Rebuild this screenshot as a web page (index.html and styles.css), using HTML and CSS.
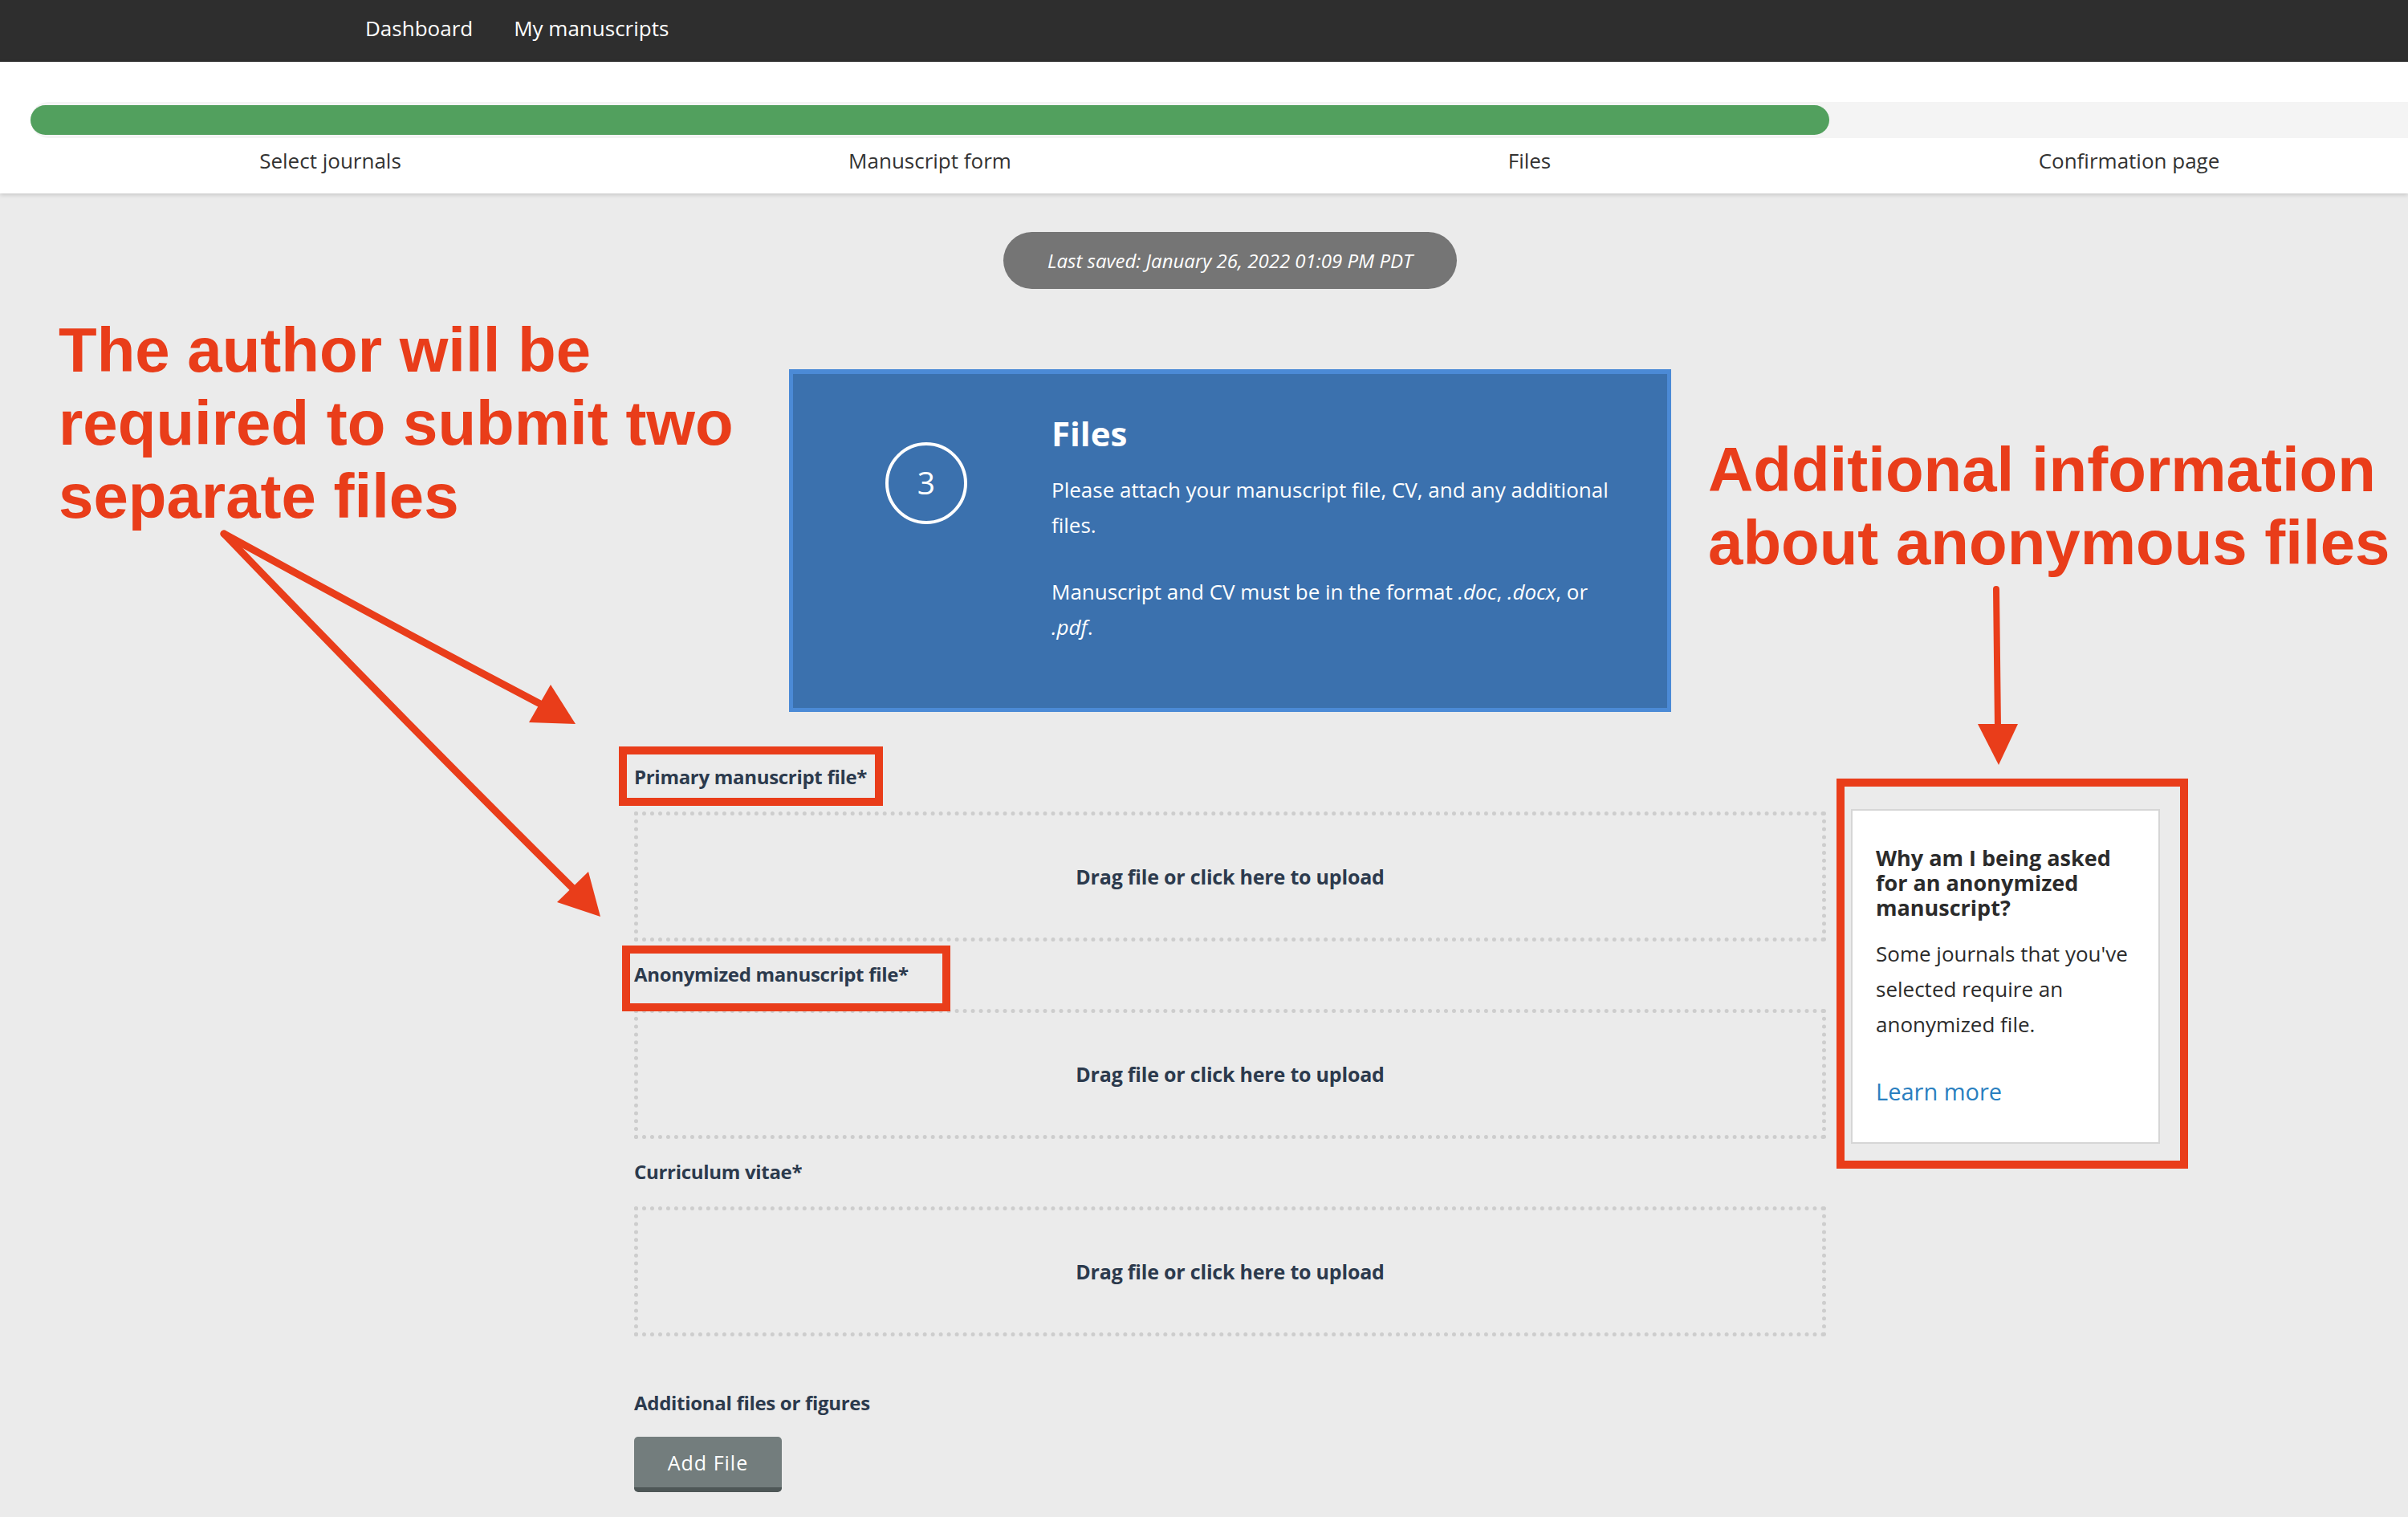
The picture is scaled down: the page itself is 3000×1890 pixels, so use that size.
FILE: index.html
```html
<!DOCTYPE html>
<html lang="en">
<head>
  <meta charset="UTF-8">
  <meta name="viewport" content="width=device-width, initial-scale=1.0">
  <title>Submit manuscript - Files</title>
  <link rel="stylesheet" href="styles.css">
</head>
<body>
  <div class="page">
    <nav class="topnav">
      <a href="#">Dashboard</a>
      <a href="#">My manuscripts</a>
    </nav>

    <header class="progress-header">
      <div class="progress-track">
        <div class="progress-fill"></div>
      </div>
      <ol class="steps">
        <li>Select journals</li>
        <li>Manuscript form</li>
        <li>Files</li>
        <li>Confirmation page</li>
      </ol>
    </header>

    <main class="content">
      <div class="last-saved">Last saved: January 26, 2022 01:09 PM PDT</div>

      <section class="intro">
        <div class="step-circle">3</div>
        <div class="intro-text">
          <h1>Files</h1>
          <p>Please attach your manuscript file, CV, and any additional files.</p>
          <p>Manuscript and CV must be in the format <em>.doc</em>, <em>.docx</em>, or <em>.pdf</em>.</p>
        </div>
      </section>

      <div class="fields">
        <div class="field">
          <label class="field-label"><span class="marked marked-primary">Primary manuscript file*</span></label>
          <div class="dropzone">Drag file or click here to upload</div>
        </div>
        <div class="field">
          <label class="field-label"><span class="marked marked-anon">Anonymized manuscript file*</span></label>
          <div class="dropzone">Drag file or click here to upload</div>
        </div>
        <div class="field">
          <label class="field-label">Curriculum vitae*</label>
          <div class="dropzone">Drag file or click here to upload</div>
        </div>
        <div class="field field-extra">
          <label class="field-label">Additional files or figures</label>
          <button type="button" class="add-button">Add File</button>
        </div>
      </div>

      <aside class="help">
        <div class="help-card">
          <h2>Why am I being asked for an anonymized manuscript?</h2>
          <p>Some journals that you've selected require an anonymized file.</p>
          <a href="#">Learn more</a>
        </div>
      </aside>
    </main>

    <!-- review annotations laid over the screenshot -->
    <p class="note note-left">The author will be required to submit two separate files</p>
    <p class="note note-right">Additional information about anonymous files</p>
    <svg class="arrows" width="3000" height="1890" viewBox="0 0 3000 1890">
      <g fill="none" stroke="#e93d1a" stroke-width="9" stroke-linecap="round">
        <path d="M279 665 Q 470 770 675 878"/>
        <path d="M279 665 Q 500 895 713 1106"/>
        <path d="M2487 734 L 2489 906" stroke-width="8"/>
      </g>
      <g fill="#e93d1a">
        <polygon points="717,902 659,900 686,853"/>
        <polygon points="748,1142 694,1124 733,1086"/>
        <polygon points="2464,902 2514,902 2490,953"/>
      </g>
    </svg>
  </div>
</body>
</html>
```

FILE: styles.css
```css
:root {
  --nav-bg: #2e2e2e;
  --page-bg: #ebebeb;
  --green: #52a05e;
  --track: #f4f4f4;
  --ink: #2c3a4d;
  --blue: #3b71ae;
  --blue-edge: #4b8ad6;
  --note-red: #e93d1a;
  --link: #2a7fc0;
}

* {
  box-sizing: border-box;
  margin: 0;
  padding: 0;
}

body {
  font-family: 'Open Sans', 'Noto Sans', sans-serif;
  background-color: var(--page-bg);
  color: var(--ink);
}

.page {
  position: relative;
  min-height: 1890px;
  overflow: hidden;
}

/* top navigation */
.topnav {
  display: flex;
  gap: 51px;
  height: 77px;
  padding-left: 455px;
  background-color: var(--nav-bg);
}

.topnav a {
  color: #ffffff;
  text-decoration: none;
  font-size: 26px;
  line-height: 71px;
}

/* progress */
.progress-header {
  background-color: #ffffff;
  padding: 50px 0 0 38px;
  box-shadow: 0 2px 5px rgba(0, 0, 0, 0.15);
  position: relative;
  z-index: 1;
}

.progress-track {
  width: 2988px;
  padding: 4px 0;
  background-color: var(--track);
  border-radius: 23px 0 0 23px;
}

.progress-fill {
  width: 75%;
  height: 37px;
  background-color: var(--green);
  border-radius: 19px;
}

.steps {
  list-style: none;
  display: grid;
  grid-template-columns: repeat(4, 747px);
  padding: 13px 0 26px;
}

.steps li {
  text-align: center;
  font-size: 26px;
  line-height: 30px;
  color: #333333;
}

/* main grid */
.content {
  display: grid;
  grid-template-columns: 1485px 385px;
  column-gap: 31px;
  padding-left: 790px;
  padding-bottom: 30px;
}

.last-saved {
  grid-column: 1;
  justify-self: center;
  margin-top: 48px;
  height: 71px;
  padding: 0 55px;
  border-radius: 36px;
  background-color: #757575;
  color: #ffffff;
  font-style: italic;
  font-size: 24px;
  line-height: 71px;
}

.intro {
  grid-column: 1;
  justify-self: center;
  display: flex;
  align-items: flex-start;
  gap: 105px;
  width: 1099px;
  height: 427px;
  margin-top: 100px;
  padding: 49px 0 0 115px;
  background-color: var(--blue);
  border: 5px solid var(--blue-edge);
  border-top-width: 6px;
  color: #ffffff;
}

.step-circle {
  flex: none;
  width: 102px;
  height: 102px;
  margin-top: 36px;
  border: 4px solid #ffffff;
  border-radius: 50%;
  text-align: center;
  font-size: 39px;
  line-height: 92px;
}

.intro-text {
  width: 720px;
}

.intro-text h1 {
  font-size: 42px;
  font-weight: 700;
  line-height: 50px;
  margin-bottom: 23px;
}

.intro-text p {
  font-size: 26px;
  line-height: 44px;
}

.intro-text p + p {
  margin-top: 39px;
}

/* upload fields */
.fields {
  grid-column: 1;
  grid-row: 3;
  margin-top: 66px;
}

.field {
  margin-bottom: 26px;
}

.field-label {
  display: block;
  margin-bottom: 28px;
  font-size: 24px;
  font-weight: 700;
  letter-spacing: -0.3px;
  line-height: 30px;
}

.dropzone {
  height: 162px;
  display: flex;
  align-items: center;
  justify-content: center;
  border: 5px dotted #cdcdcd;
  font-size: 25px;
  font-weight: 700;
  letter-spacing: -0.2px;
  cursor: pointer;
}

.field-extra {
  margin-top: 68px;
}

.field-extra .field-label {
  margin-bottom: 27px;
}

.add-button {
  width: 184px;
  height: 69px;
  border: none;
  border-bottom: 6px solid #4e5757;
  border-radius: 5px;
  background-color: #737d7d;
  color: #ffffff;
  font-family: inherit;
  font-size: 25px;
  letter-spacing: 1px;
  cursor: pointer;
}

/* help card */
.help {
  grid-column: 2;
  grid-row: 3;
  align-self: start;
  margin-top: 121px;
}

.help-card {
  position: relative;
  background-color: #ffffff;
  border: 2px solid #d6d6d6;
  padding: 43px 29px 43px;
}

.help-card h2 {
  font-size: 27px;
  font-weight: 700;
  line-height: 31px;
  color: #2b2b2b;
  margin-bottom: 20px;
}

.help-card p {
  font-size: 26px;
  line-height: 44px;
  color: #2b2b2b;
  margin-bottom: 42px;
}

.help-card a {
  display: block;
  font-size: 29px;
  line-height: 40px;
  color: var(--link);
  text-decoration: none;
}

/* red review marks */
.marked {
  position: relative;
}

.marked::after {
  content: '';
  position: absolute;
  border: 10px solid var(--note-red);
}

.marked-primary::after {
  left: -19px;
  right: -20px;
  top: -21px;
  bottom: -20px;
}

.marked-anon::after {
  left: -15px;
  right: -52px;
  top: -19px;
  bottom: -30px;
}

.help-card::after {
  content: '';
  position: absolute;
  left: -20px;
  right: -37px;
  top: -40px;
  bottom: -33px;
  border: 10px solid var(--note-red);
}

.note {
  position: absolute;
  font-family: 'Liberation Sans', Arial, sans-serif;
  font-weight: 700;
  font-size: 78px;
  line-height: 91px;
  color: var(--note-red);
}

.note-left {
  left: 73px;
  top: 391px;
  width: 900px;
}

.note-right {
  left: 2128px;
  top: 540px;
  width: 880px;
}

.arrows {
  position: absolute;
  left: 0;
  top: 0;
  pointer-events: none;
}
```
